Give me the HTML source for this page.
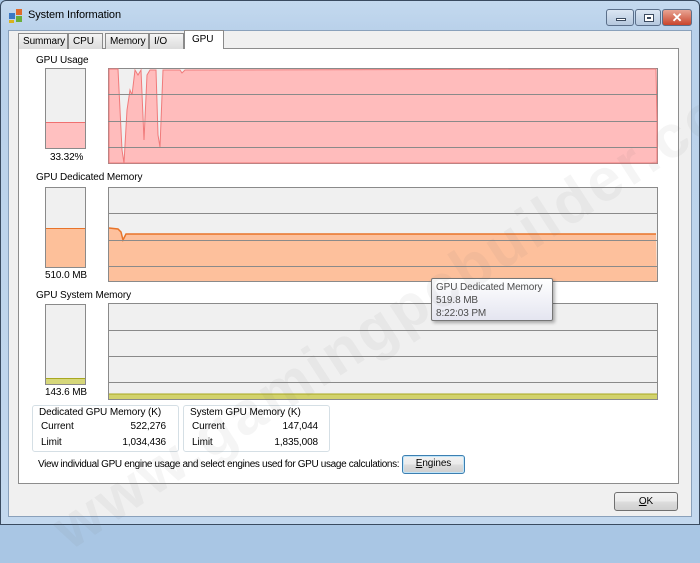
<!DOCTYPE html>
<html><head><meta charset="utf-8"><style>
*{margin:0;padding:0;box-sizing:border-box}
body{width:700px;height:525px;overflow:hidden;font-family:"Liberation Sans",sans-serif;font-size:10px;letter-spacing:-0.1px;color:#000;position:relative;background:#a9c6e4}
.frame{position:absolute;left:0;top:0;width:700px;height:525px;border:1px solid #3a4b60;border-radius:6px 6px 0 0;background:linear-gradient(180deg,#c4d9ef 0,#b9d1ea 30px,#c3d8ee 100%)}
.client{position:absolute;left:8px;top:30px;width:684px;height:487px;background:#f0f0f0;border:1px solid #8aa1bb}
.t{position:absolute;white-space:nowrap}
.title{left:28px;top:9px;font-size:11px;color:#000}
.tab{position:absolute;top:33px;height:16px;border:1px solid #8a8a8a;border-bottom:none;background:linear-gradient(#f4f4f4,#dcdcdc);padding:2px 0 0 4px;font-size:10px;overflow:hidden;white-space:nowrap}
.panel{position:absolute;left:18px;top:48px;width:661px;height:436px;background:#fff;border:1px solid #8d8d8d}
.bar{position:absolute;left:45px;width:41px;height:81px;background:#f0f0f0;border:1px solid #8a8a8a}
.gb{position:absolute;top:405px;width:147px;height:47px;border:1px solid #d5dfe5;border-radius:3px}
.btn{position:absolute;border:1px solid #707070;border-radius:3px;background:linear-gradient(#f2f2f2 0,#ebebeb 50%,#dddddd 51%,#cfcfcf 100%);text-align:center;font-size:10px}
.cb{position:absolute;top:9px;height:17px;border:1px solid #5b6f8a;border-radius:3px}
.wm{position:absolute;left:40px;top:505px;font-size:60px;font-weight:bold;letter-spacing:3px;color:rgba(110,110,110,.07);transform:rotate(-33deg);transform-origin:0 0;white-space:nowrap;z-index:10;pointer-events:none}
</style></head><body>
<div class="frame"></div>
<svg style="position:absolute;left:8px;top:8px" width="16" height="16"><rect x="1" y="5" width="6" height="6" fill="#3b78c4"/><rect x="8" y="1" width="6" height="6" fill="#e06a2a"/><rect x="8" y="8" width="6" height="6" fill="#6aae3a"/><rect x="1" y="12" width="5" height="3" fill="#d9b21e"/></svg>
<div class="t title">System Information</div>
<div class="cb" style="left:606px;width:28px;background:linear-gradient(#dbe6f3,#b5c8de)"><div style="position:absolute;left:9px;top:8px;width:10px;height:3px;background:#fff;border:1px solid #3b4b60"></div></div>
<div class="cb" style="left:635px;width:26px;background:linear-gradient(#dbe6f3,#b5c8de)"><div style="position:absolute;left:8px;top:4px;width:10px;height:8px;border:1px solid #3b4b60;background:#fff;box-shadow:inset 0 0 0 2px #fff,inset 0 0 0 3px #3b4b60"></div></div>
<div class="cb" style="left:662px;width:30px;background:linear-gradient(#e8a493,#c9452c);color:#fff;font-weight:bold;text-align:center;font-size:13px;line-height:15px">✕</div>
<div class="client"></div>
<div class="panel"></div>
<div class="tab" style="left:18px;width:50px">Summary</div>
<div class="tab" style="left:68px;width:35px">CPU</div>
<div class="tab" style="left:105px;width:44px">Memory</div>
<div class="tab" style="left:149px;width:35px">I/O</div>
<div class="tab" style="left:184px;top:30px;height:19px;width:40px;background:#fff;padding:3px 0 0 7px">GPU</div>

<div class="t" style="left:36px;top:55px">GPU Usage</div>
<div class="bar" style="top:68px"><div style="position:absolute;left:0;right:0;bottom:0;height:26px;background:#ffc0c0;border-top:1px solid #f07070"></div></div>
<div class="t" style="left:50px;top:152px">33.32%</div>

<div class="t" style="left:36px;top:172px">GPU Dedicated Memory</div>
<div class="bar" style="top:187px"><div style="position:absolute;left:0;right:0;bottom:0;height:39px;background:#fdc09a;border-top:1px solid #e8742a"></div></div>
<div class="t" style="left:45px;top:270px">510.0 MB</div>

<div class="t" style="left:36px;top:290px">GPU System Memory</div>
<div class="bar" style="top:304px"><div style="position:absolute;left:0;right:0;bottom:0;height:6px;background:#d6d77a;border-top:1px solid #a8a820"></div></div>
<div class="t" style="left:45px;top:387px">143.6 MB</div>

<svg style="position:absolute;left:0;top:0" width="700" height="525">
<g stroke="#8a8a8a" fill="#f0f0f0">
<rect x="108.5" y="68.5" width="549" height="95"/>
<rect x="108.5" y="187.5" width="549" height="94"/>
<rect x="108.5" y="303.5" width="549" height="96"/>
</g>
<path d="M109 69 L118 69 L122 150 L124 163 L127 110 L130 90 L132 95 L135 70 L138 75 L141 70 L144 140 L147 75 L150 70 L153 70 L156 70 L158 135 L160 147 L163 70 L180 70 L182 73 L185 70 L656 69 L657 120 L657 163 L109 163 Z" fill="#ffbcbc" stroke="#f07a7a" stroke-width="1"/>
<path d="M109 228 L118 229 L121 232 L123 240 L126 234 L656 234 L657 281 L109 281 Z" fill="#fdc09c"/>
<path d="M109 228 L118 229 L121 232 L123 240 L126 234 L656 234" fill="none" stroke="#e8742a" stroke-width="1.5"/>
<rect x="109" y="394" width="548" height="5" fill="#d2d26c"/>
<line x1="109" y1="394" x2="657" y2="394" stroke="#a8a820"/>
<g stroke="#8a8a8a">
<line x1="108" y1="94.5" x2="657" y2="94.5"/><line x1="108" y1="121.5" x2="657" y2="121.5"/><line x1="108" y1="147.5" x2="657" y2="147.5"/>
<line x1="108" y1="213.5" x2="657" y2="213.5"/><line x1="108" y1="240.5" x2="657" y2="240.5"/><line x1="108" y1="266.5" x2="657" y2="266.5"/>
<line x1="108" y1="330.5" x2="657" y2="330.5"/><line x1="108" y1="356.5" x2="657" y2="356.5"/><line x1="108" y1="382.5" x2="657" y2="382.5"/>
</g>
</svg>

<div style="position:absolute;left:431px;top:278px;width:122px;height:43px;background:linear-gradient(#fff,#e4e5f0);border:1px solid #767676;border-radius:2px;box-shadow:2px 2px 3px rgba(0,0,0,.3);padding:2px 0 0 4px;color:#4c4c4c;line-height:13px;white-space:nowrap">GPU Dedicated Memory<br>519.8 MB<br>8:22:03 PM</div>

<div class="gb" style="left:32px"></div>
<div class="t" style="left:37px;top:407px;background:#fff;padding:0 2px">Dedicated GPU Memory (K)</div>
<div class="t" style="left:41px;top:421px">Current</div><div class="t" style="left:110px;top:421px;width:56px;text-align:right">522,276</div>
<div class="t" style="left:41px;top:437px">Limit</div><div class="t" style="left:100px;top:437px;width:66px;text-align:right">1,034,436</div>
<div class="gb" style="left:183px"></div>
<div class="t" style="left:188px;top:407px;background:#fff;padding:0 2px">System GPU Memory (K)</div>
<div class="t" style="left:192px;top:421px">Current</div><div class="t" style="left:260px;top:421px;width:58px;text-align:right">147,044</div>
<div class="t" style="left:192px;top:437px">Limit</div><div class="t" style="left:252px;top:437px;width:66px;text-align:right">1,835,008</div>
<div class="t" style="left:38px;top:459px;letter-spacing:-0.35px">View individual GPU engine usage and select engines used for GPU usage calculations:</div>
<div class="btn" style="left:402px;top:455px;width:63px;height:19px;border-color:#3c7fb1;line-height:16px;box-shadow:inset 0 0 0 1px #c0e4f8"><u>E</u>ngines</div>
<div class="btn" style="left:614px;top:492px;width:64px;height:19px;line-height:17px"><u>O</u>K</div>
<div class="wm">www.gamingpcbuilder.com</div>
</body></html>
